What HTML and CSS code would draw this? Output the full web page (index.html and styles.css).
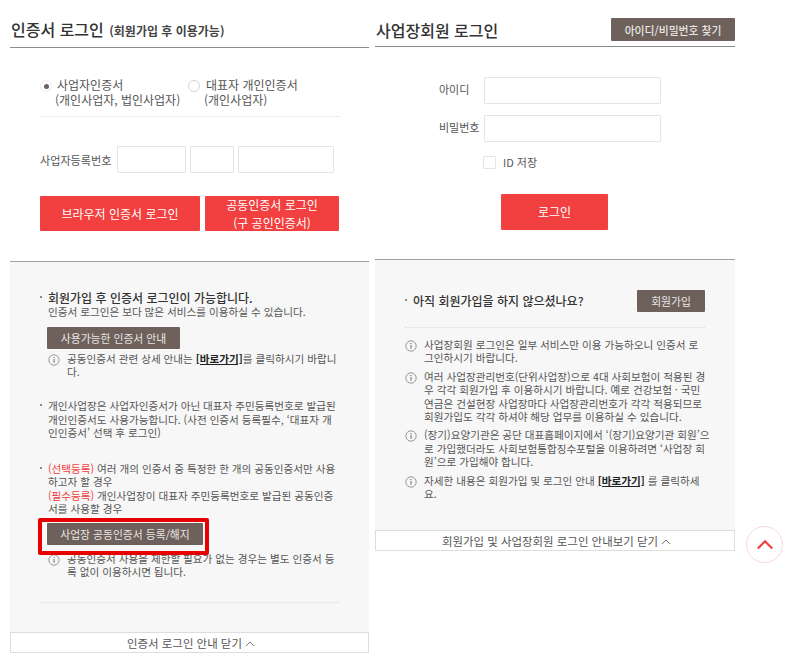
FILE: index.html
```html
<!DOCTYPE html>
<html lang="ko">
<head>
<meta charset="utf-8">
<title>로그인</title>
<link rel="stylesheet" href="styles.css">
</head>
<body>
<svg class="defs" width="0" height="0" aria-hidden="true">
  <symbol id="info" viewBox="0 0 12 12">
    <circle cx="6" cy="6" r="5.2" fill="none" stroke="#999" stroke-width="1"/>
    <rect x="5.5" y="5" width="1.1" height="3.8" fill="#777"/>
    <rect x="5.5" y="3" width="1.1" height="1.1" fill="#777"/>
  </symbol>
  <symbol id="caret" viewBox="0 0 10 6">
    <path d="M1 5 L5 1 L9 5" fill="none" stroke="#777" stroke-width="1"/>
  </symbol>
</svg>
<main class="page">
  <section class="col col-left">
    <header class="head">
      <h2 class="title">인증서 로그인 <small>(회원가입 후 이용가능)</small></h2>
    </header>
    <div class="cert-form">
      <div class="radios">
        <div class="radio radio-a">
          <span class="dot on"></span>
          <div class="radio-text">사업자인증서<br><span class="sub">(개인사업자, 법인사업자)</span></div>
        </div>
        <div class="radio radio-b">
          <span class="dot"></span>
          <div class="radio-text">대표자 개인인증서<br><span class="sub">(개인사업자)</span></div>
        </div>
      </div>
      <div class="biz">
        <span class="biz-label">사업자등록번호</span>
        <span class="input b1"></span>
        <span class="input b2"></span>
        <span class="input b3"></span>
      </div>
      <div class="btns">
        <a class="btn-red wide">브라우저 인증서 로그인</a>
        <a class="btn-red narrow">공동인증서 로그인<br>(구 공인인증서)</a>
      </div>
    </div>
    <div class="panel panel-left">
      <p class="lead"><b>회원가입 후 인증서 로그인이 가능합니다.</b></p>
      <p class="text indent">인증서 로그인은 보다 많은 서비스를 이용하실 수 있습니다.</p>
      <a class="btn-brown b-guide">사용가능한 인증서 안내</a>
      <div class="info first"><svg class="ico"><use href="#info"/></svg><p>공동인증서 관련 상세 안내는 <a class="lnk">[바로가기]</a>를 클릭하시기 바랍니다.</p></div>
      <p class="bullet b-a">개인사업장은 사업자인증서가 아닌 대표자 주민등록번호로 발급된 개인인증서도 사용가능합니다. (사전 인증서 등록필수, ‘대표자 개인인증서’ 선택 후 로그인)</p>
      <p class="bullet b-b"><span class="red">(선택등록)</span> 여러 개의 인증서 중 특정한 한 개의 공동인증서만 사용하고자 할 경우<br><span class="red">(필수등록)</span> 개인사업장이 대표자 주민등록번호로 발급된 공동인증서를 사용할 경우</p>
      <div class="mark-wrap"><a class="btn-brown b-reg">사업장 공동인증서 등록/해지</a></div>
      <div class="info second"><svg class="ico"><use href="#info"/></svg><p>공동인증서 사용을 제한할 필요가 없는 경우는 별도 인증서 등록 없이 이용하시면 됩니다.</p></div>
      <hr class="dash d-left">
    </div>
    <div class="closebar">인증서 로그인 안내 닫기 <svg class="caret"><use href="#caret"/></svg></div>
  </section>

  <section class="col col-right">
    <header class="head head-right">
      <h2 class="title">사업장회원 로그인</h2>
      <a class="btn-brown b-find">아이디/비밀번호 찾기</a>
    </header>
    <div class="id-form">
      <div class="row"><span class="lab">아이디</span><span class="input wide-in"></span></div>
      <div class="row"><span class="lab">비밀번호</span><span class="input wide-in"></span></div>
      <div class="check"><span class="box"></span><span>ID 저장</span></div>
      <a class="btn-red b-login">로그인</a>
    </div>
    <div class="panel panel-right">
      <div class="join">
        <p class="lead"><b>아직 회원가입을 하지 않으셨나요?</b></p>
        <a class="btn-brown b-join">회원가입</a>
      </div>
      <hr class="dash d-right">
      <div class="info i1"><svg class="ico"><use href="#info"/></svg><p>사업장회원 로그인은 일부 서비스만 이용 가능하오니 인증서 로그인하시기 바랍니다.</p></div>
      <div class="info i2"><svg class="ico"><use href="#info"/></svg><p class="keep">여러 사업장관리번호(단위사업장)으로 4대 사회보험이 적용된 경<br>우 각각 회원가입 후 이용하시기 바랍니다. 예로 건강보험 · 국민<br>연금은 건설현장 사업장마다 사업장관리번호가 각각 적용되므로<br>회원가입도 각각 하셔야 해당 업무를 이용하실 수 있습니다.</p></div>
      <div class="info i2"><svg class="ico"><use href="#info"/></svg><p class="keep">(장기)요양기관은 공단 대표홈페이지에서 ‘(장기)요양기관 회원’으<br>로 가입했더라도 사회보험통합징수포털을 이용하려면 ‘사업장 회<br>원’으로 가입해야 합니다.</p></div>
      <div class="info i2"><svg class="ico"><use href="#info"/></svg><p>자세한 내용은 회원가입 및 로그인 안내 <a class="lnk">[바로가기]</a> 를 클릭하세요.</p></div>
    </div>
    <div class="closebar">회원가입 및 사업장회원 로그인 안내보기 닫기 <svg class="caret"><use href="#caret"/></svg></div>
  </section>
</main>
<a class="totop" aria-label="위로"><svg viewBox="0 0 20 12" width="18" height="11"><path d="M2 10.5 L10 2.5 L18 10.5" fill="none" stroke="#f24040" stroke-width="2.4"/></svg></a>
</body>
</html>
```

FILE: styles.css
```css
* { box-sizing: border-box; }
html, body { margin: 0; padding: 0; }
body {
  width: 800px;
  height: 670px;
  overflow: hidden;
  position: relative;
  background: #fff;
  color: #555;
  font-family: "Noto Sans CJK KR", "Noto Sans", sans-serif;
  font-size: 11px;
  word-break: break-all;
}
p { margin: 0; }
.defs { position: absolute; }
.page { display: flex; gap: 6px; padding-left: 10px; }
.col { display: flex; flex-direction: column; }
.col-left { width: 359px; }
.col-right { width: 360px; }

.head { height: 48px; border-bottom: 1.5px solid #8c8c8c; display: flex; align-items: flex-end; padding-bottom: 4px; }
.head-right { height: 47px; justify-content: space-between; position: relative; }
.title { margin: 0; padding-left: 1px; font-size: 16px; line-height: 24px; font-weight: 500; color: #333; }
.title small { font-size: 12px; font-weight: 700; margin-left: 1px; color: #444; }

.cert-form { height: 213px; padding: 29px 30px 0; }
.radios { display: flex; height: 40px; border-bottom: 1px dotted #ddd; font-size: 12px; line-height: 15px; color: #555; }
.radio { display: flex; position: relative; }
.radio-a { width: 148px; }
.dot { width: 12px; height: 12px; border-radius: 50%; border: 1px solid #d5d5d5; margin-top: 3px; flex: none; position: relative; background: #fff; }
.dot.on { border-color: #eee; }
.dot.on::after { content: ""; position: absolute; left: 2.5px; top: 2.5px; width: 5px; height: 5px; border-radius: 50%; background: #6e615b; }
.radio-text { margin-left: 5px; }
.radio .sub { margin-left: -2px; }
.radio-b .radio-text { margin-left: 6px; }
.biz { display: flex; align-items: center; margin-top: 29px; height: 27px; }
.biz-label { width: 77px; font-size: 11.1px; color: #555; white-space: nowrap; }
.input { display: block; height: 27px; border: 1px solid #e5e5e5; background: #fff; border-radius: 1px; }
.b1 { width: 69px; }
.b2 { width: 44px; margin-left: 4px; }
.b3 { width: 96px; margin-left: 4px; }
.btns { display: flex; justify-content: space-between; margin-top: 23px; }
.btn-red { display: flex; align-items: center; justify-content: center; text-align: center; background: #f24040; color: #fff; border-radius: 1px; font-size: 12px; line-height: 18px; }
.wide { width: 160px; height: 35px; }
.narrow { width: 134px; height: 35px; }

.panel { background: #f7f7f7; border-top: 1.5px solid #a0a0a0; }
.panel-left { height: 371px; padding: 0 30px; }
.panel-right { height: 271px; padding: 0 30px; }
.lead { font-size: 12px; line-height: 16px; color: #333; position: relative; padding-left: 8px; }
.lead::before { content: ""; position: absolute; left: 0; top: 6px; width: 2px; height: 2px; background: #666; border-radius: 50%; }
.lead b { font-weight: 500; }
.panel-left .lead { margin-top: 28px; }
.text { font-size: 10.6px; line-height: 13.5px; }
.indent { padding-left: 8px; margin-top: -1px; }
.btn-brown { display: flex; align-items: center; justify-content: center; background: #6e615b; color: #e9e6e4; font-size: 10.8px; border-radius: 1px; }
.b-guide { width: 133px; height: 22px; margin: 8px 0 0 7px; }
.b-reg { width: 156px; height: 22px; }
.b-find { width: 124px; height: 23px; position: absolute; right: 0; top: 18px; font-weight: 500; }
.b-join { width: 68px; height: 22px; flex: none; }

.info { display: flex; font-size: 10.6px; line-height: 13.4px; }
.info p { flex: 1; }
.info .keep { white-space: nowrap; }
.ico { width: 12px; height: 12px; flex: none; margin: 2px 7px 0 0; }
.first { margin: 3px 0 0 8px; }
.second { margin: 7px 0 0 8px; }
.lnk { font-weight: 700; color: #222; text-decoration: underline; }
.bullet { font-size: 10.6px; line-height: 13.5px; padding-left: 8px; position: relative; }
.bullet::before { content: ""; position: absolute; left: 0; top: 5px; width: 2px; height: 2px; background: #666; border-radius: 50%; }
.b-a { margin-top: 21px; }
.b-b { margin-top: 22px; }
.red { color: #f24040; }
.mark-wrap { position: relative; margin: 7px 0 0 7px; width: 156px; }
.mark-wrap::after { content: ""; box-sizing: border-box; position: absolute; left: -9px; top: -5px; width: 171px; height: 37px; border: 4px solid #e60000; border-radius: 2px; }
.dash { border: 0; border-top: 1px dotted #ddd; margin: 0; }
.d-left { margin-top: 23px; }

.join { display: flex; justify-content: space-between; align-items: center; margin-top: 30px; }
.d-right { margin-top: 15px; }
.i1 { margin-top: 10px; }
.i2 { margin-top: 5px; }

.closebar { height: 21px; background: #fff; border: 1px solid #ddd; padding-left: 3px; display: flex; align-items: center; justify-content: center; gap: 3px; font-size: 11.45px; color: #555; }
.caret { width: 10px; height: 6px; margin-top: 3px; }

.totop { position: absolute; left: 746px; top: 526px; width: 37px; height: 37px; border: 1px solid #fbd5d5; border-radius: 50%; background: #fff; display: flex; align-items: center; justify-content: center; }

.id-form { height: 212px; position: relative; padding-top: 30px; display: flex; flex-direction: column; }
.row { display: flex; align-items: center; height: 27px; margin-bottom: 11px; }
.row .lab { width: 109px; padding-left: 64px; padding-bottom: 3px; font-size: 11px; white-space: nowrap; }
.wide-in { width: 177px; }
.check { display: flex; align-items: center; margin-left: 108px; font-size: 11px; height: 16px; gap: 7px; margin-top: 1px; }
.box { width: 13px; height: 13px; border: 1px solid #e5e5e5; border-radius: 1px; background: #fff; }
.b-login { width: 107px; height: 36px; margin: 24px 0 0 126px; }
```
